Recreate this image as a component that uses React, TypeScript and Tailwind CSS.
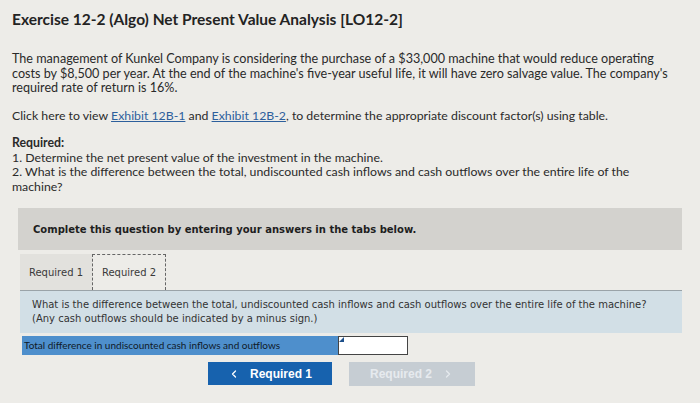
import { ChevronLeft, ChevronRight } from 'lucide-react'

const body = { fontFamily: 'Lato, "Open Sans", sans-serif' }
const verdana = { fontFamily: '"DejaVu Sans", Verdana, sans-serif' }

export default function App() {
  return (
    <div className="h-[403px] w-[700px] overflow-hidden bg-[#edece8] text-[#2a2a2a]" style={body}>
      <div className="px-3 pt-[9px]">
        <h1 className="text-[15.5px] font-bold leading-[20px] text-[#232323]">
          Exercise 12-2 (Algo) Net Present Value Analysis [LO12-2]
        </h1>

        <p className="mt-[23px] text-[12.6px] leading-[14.5px]">
          The management of Kunkel Company is considering the purchase of a $33,000 machine that would reduce operating
          <br />
          costs by $8,500 per year. At the end of the machine's five-year useful life, it will have zero salvage value. The company's
          <br />
          required rate of return is 16%.
        </p>

        <p className="mt-[13px] text-[12.3px] leading-[14.5px]">
          Click here to view{' '}
          <span className="text-[#2d5f9c] underline">Exhibit 12B-1</span> and{' '}
          <span className="text-[#2d5f9c] underline">Exhibit 12B-2</span>, to determine the appropriate discount
          factor(s) using table.
        </p>

        <div className="mt-[13px] text-[12.3px] leading-[14.5px]">
          <p className="font-bold">Required:</p>
          <p>1. Determine the net present value of the investment in the machine.</p>
          <p>
            2. What is the difference between the total, undiscounted cash inflows and cash outflows over the entire life of the
            <br />
            machine?
          </p>
        </div>
      </div>

      <div className="ml-[18px] mr-[18px] mt-[14px]" style={verdana}>
        <div className="flex h-[42px] items-center bg-[#d3d2ce] pl-[15px] text-[10px] font-bold text-[#1e1e1e]">
          Complete this question by entering your answers in the tabs below.
        </div>

        <div className="ml-[2px] mt-[4px] flex h-[37px] items-stretch border-b border-[#9aa3a8] text-[10px] text-[#3a3a3a]">
          <div className="flex w-[72px] items-center justify-center bg-[#e2e1dd]">Required 1</div>
          <div className="flex w-[74px] items-center justify-center border border-dashed border-b-0 border-[#666]">
            Required 2
          </div>
        </div>

        <div className="ml-[2px] bg-[#d2dfe6] px-[12px] py-[7px] text-[10px] leading-[14px] text-[#333]">
          <p>What is the difference between the total, undiscounted cash inflows and cash outflows over the entire life of the machine?</p>
          <p>(Any cash outflows should be indicated by a minus sign.)</p>
        </div>

        <div className="ml-[4px] mt-[3px] flex h-[19px] text-[10px]" style={body}>
          <div className="flex w-[316px] items-center bg-[#4e8fcc] pl-[2px] text-[#101a28]">
            Total difference in undiscounted cash inflows and outflows
          </div>
          <div className="relative w-[70px] border border-[#444] bg-white">
            <span className="absolute left-0 top-0 h-0 w-0 rotate-90 border-l-[5px] border-t-[5px] border-l-transparent border-t-[#1d4f8a]" />
          </div>
        </div>

        <div className="mt-[7px] flex justify-center gap-[17px] pr-[17px]" style={{ fontFamily: '"Liberation Sans", Arial, sans-serif' }}>
          <button className="flex h-[23px] w-[124px] items-center justify-center gap-[10px] bg-[#1762ae] text-[12px] font-bold text-white">
            <ChevronLeft className="h-[12px] w-[12px]" strokeWidth={2.5} />
            Required 1
          </button>
          <button className="flex h-[24px] w-[126px] items-center justify-center gap-[10px] bg-[#c6cdd3] text-[12px] font-bold text-[#e6eaee]">
            Required 2
            <ChevronRight className="h-[12px] w-[12px]" strokeWidth={2.5} />
          </button>
        </div>
      </div>
    </div>
  )
}
